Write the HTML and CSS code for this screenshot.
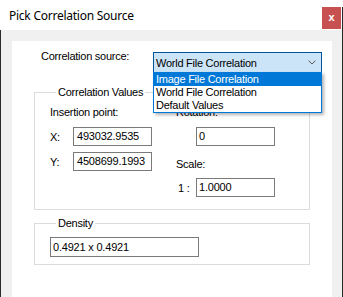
FILE: index.html
```html
<!DOCTYPE html>
<html lang="en">
<head>
    <meta charset="UTF-8">
    <meta name="viewport" content="width=device-width, initial-scale=1.0">
    <title>Pick Correlation Source</title>
    <link rel="stylesheet" href="styles.css">
</head>
<body>
    <div class="window">
        <div class="titlebar">
            <span class="title">Pick Correlation Source</span>
            <span class="close">x</span>
            <span class="edge"></span>
        </div>
        <div class="frame">
            <div class="panel">
                <div class="source-row">
                    <span class="source-label">Correlation source:</span>
                    <div class="combo">
                        <span class="combo-text">World File Correlation</span>
                        <svg class="chevron" width="8" height="5" viewBox="0 0 8 5">
                            <polyline points="0.5,0.5 4,4 7.5,0.5" fill="none" stroke="#5a5a5a" stroke-width="1"/>
                        </svg>
                        <!-- liste ouverte du combo -->
                        <ul class="combo-list">
                            <li class="selected">Image File Correlation</li>
                            <li>World File Correlation</li>
                            <li>Default Values</li>
                        </ul>
                    </div>
                </div>

                <fieldset class="group values">
                    <legend>Correlation Values</legend>
                    <div class="values-grid">
                        <div class="col">
                            <div class="lbl">Insertion point:</div>
                            <div class="coord first">
                                <span class="axis">X:</span>
                                <span class="field">493032.9535</span>
                            </div>
                            <div class="coord second">
                                <span class="axis">Y:</span>
                                <span class="field">4508699.1993</span>
                            </div>
                        </div>
                        <div class="col">
                            <div class="lbl">Rotation:</div>
                            <div class="field rotation">0</div>
                            <div class="lbl scale">Scale:</div>
                            <div class="coord ratio-row">
                                <span class="ratio">1 :</span>
                                <span class="field">1.0000</span>
                            </div>
                        </div>
                    </div>
                </fieldset>

                <fieldset class="group density">
                    <legend>Density</legend>
                    <div class="field density-field">0.4921 x 0.4921</div>
                </fieldset>
            </div>
        </div>
    </div>
</body>
</html>
```

FILE: styles.css
```css
body {
    margin: 0;
    padding: 0;
    width: 343px;
    height: 297px;
    overflow: hidden;
    background-color: #f0f0f0;
    font-family: "Liberation Sans", Arial, sans-serif;
    font-size: 11px;
    color: #000;
}
.window {
    height: 297px;
    display: flex;
    flex-direction: column;
}
.titlebar {
    height: 30px;
    flex: none;
    display: flex;
    align-items: center;
    background-color: #fff;
}
.title {
    padding-left: 9px;
    font-family: "Noto Sans", "Segoe UI", sans-serif;
    font-size: 12px;
    letter-spacing: -0.25px;
}
.close {
    margin-left: auto;
    align-self: flex-start;
    margin-top: 7px;
    width: 19px;
    height: 22px;
    background-color: #c75050;
    color: #fff;
    font-weight: bold;
    font-size: 11px;
    line-height: 20px;
    text-align: center;
}
.edge {
    align-self: flex-start;
    margin-top: 7px;
    width: 1px;
    height: 23px;
    margin-left: 1px;
    background-color: #2b2b2b;
}
.frame {
    flex: 1;
    display: flex;
    padding: 11px 10px 0 11px;
    border-left: 1px solid #2b2b2b;
    border-right: 1px solid #2b2b2b;
}
.panel {
    flex: 1;
    background-color: #fff;
    letter-spacing: -0.25px;
}
.source-row {
    display: flex;
    align-items: flex-start;
    padding: 9px 0 0 29px;
}
.source-label {
    width: 112px;
    line-height: 13px;
}
.combo {
    position: relative;
    box-sizing: border-box;
    width: 169px;
    height: 21px;
    margin-top: 2px;
    display: flex;
    align-items: center;
    padding: 0 5px 0 2px;
    background-color: #cce4f7;
    border: 1px solid #005499;
}
.combo-text {
    flex: 1;
}
.chevron {
    display: block;
}
.combo-list {
    position: absolute;
    left: -1px;
    top: 19px;
    width: 169px;
    box-sizing: border-box;
    margin: 0;
    padding: 0;
    list-style: none;
    background-color: #fff;
    border: 1px solid #0078d7;
    box-shadow: 2px 2px 3px rgba(0, 0, 0, 0.3);
    z-index: 2;
}
.combo-list li {
    height: 13px;
    line-height: 13px;
    padding-left: 2px;
}
.combo-list li.selected {
    background-color: #0078d7;
    color: #fff;
}
.group {
    box-sizing: border-box;
    width: 276px;
    margin: 0 0 0 22px;
    padding: 0;
    min-width: 0;
    border: 1px solid #dcdcdc;
}
.group legend {
    margin-left: 6px;
    padding: 0 2px;
    line-height: 13px;
}
.values {
    margin-top: 13px;
    padding: 7px 0 12px 15px;
}
.values-grid {
    display: grid;
    grid-template-columns: 126px 1fr;
}
.lbl {
    line-height: 13px;
}
.coord {
    display: flex;
    align-items: center;
}
.coord.first {
    margin-top: 8px;
}
.coord.second {
    margin-top: 6px;
}
.axis {
    width: 23px;
}
.field {
    box-sizing: border-box;
    width: 79px;
    height: 19px;
    line-height: 17px;
    padding-left: 3px;
    border: 1px solid #7a7a7a;
    background-color: #fff;
    letter-spacing: -0.2px;
    white-space: nowrap;
}
.rotation {
    margin: 8px 0 0 20px;
    padding-left: 2px;
}
.scale {
    margin-top: 12px;
}
.ratio-row {
    margin-top: 7px;
}
.ratio-row .field {
    padding-left: 2px;
}
.ratio {
    width: 18px;
    margin-left: 2px;
}
.density {
    margin-top: 7px;
    padding: 7px 0 7px 15px;
}
.density-field {
    width: 149px;
    height: 20px;
    line-height: 18px;
    padding-left: 2px;
}
```
